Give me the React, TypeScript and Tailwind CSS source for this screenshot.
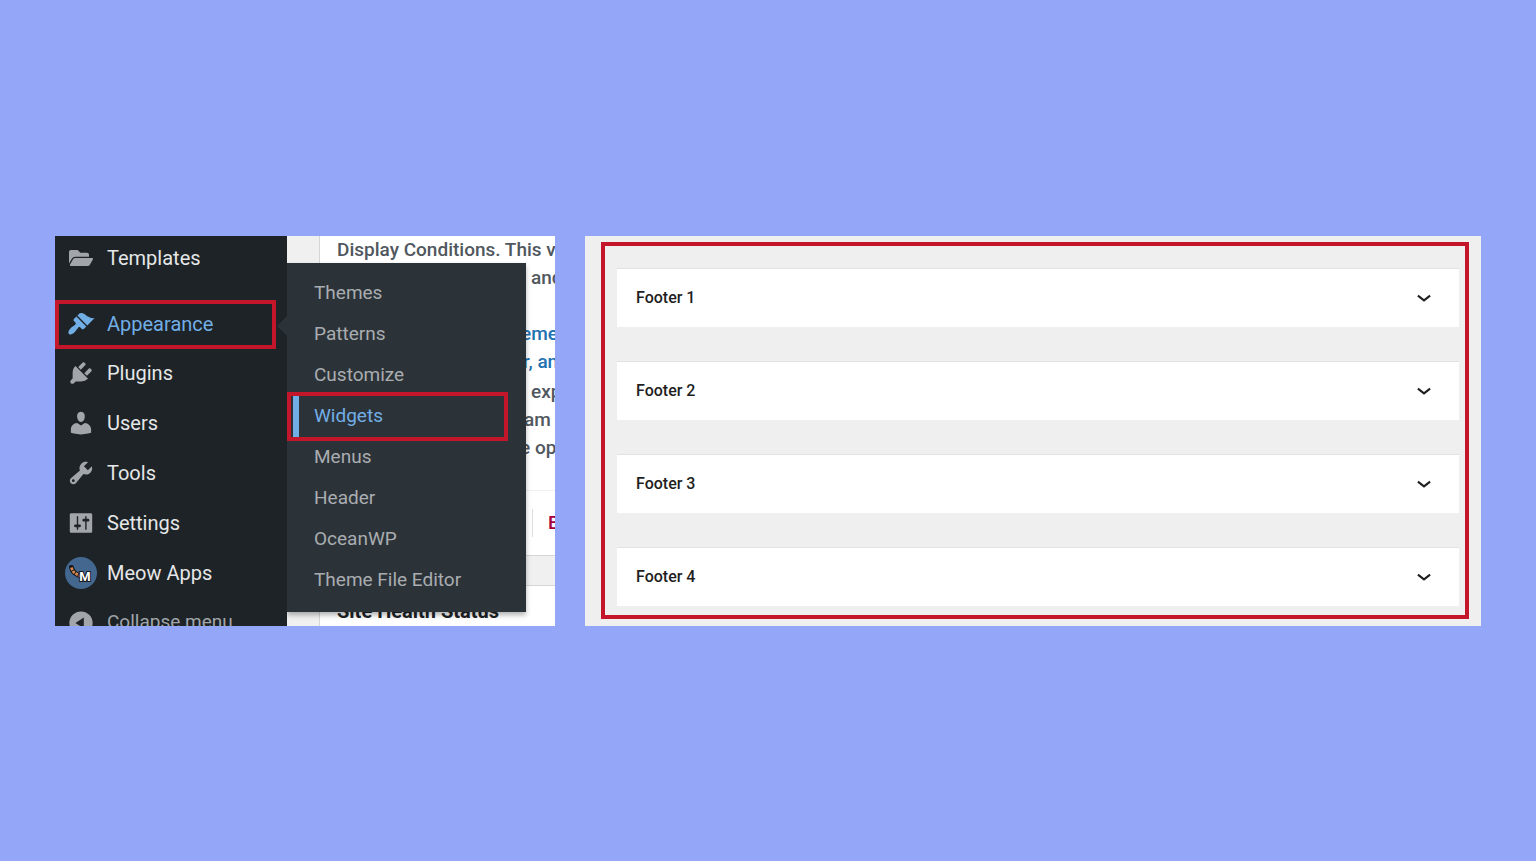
import { useState } from 'react';
import type { ReactNode } from 'react';
import { FaFolderOpen } from 'react-icons/fa';
import clsx from 'clsx';

type MenuItem = { label: string; icon: ReactNode; active?: boolean };

const Dashicon = ({ d }: { d: string }) => (
  <svg viewBox="0 0 20 20" className="w-7 h-7" fill="currentColor" aria-hidden="true">
    <path d={d} />
  </svg>
);

const MeowIcon = () => (
  <svg viewBox="0 0 32 32" className="w-8 h-8 shrink-0" aria-hidden="true">
    <circle cx="16" cy="16" r="16" fill="#43678f" />
    <path d="M6.5 10.5c1 5 4.500 6.500 9 8.500" fill="none" stroke="#16191c" strokeWidth="5" strokeLinecap="round" />
    <path d="M6.500 10.500c1 5 4.500 6.500 9 8.500" fill="none" stroke="#d9894f" strokeWidth="2.800" strokeDasharray="2.800 0.900" />
    <text
      x="20"
      y="23.5"
      textAnchor="middle"
      fill="#fff"
      stroke="#16191c"
      strokeWidth="2"
      paintOrder="stroke"
      className="font-['Roboto',sans-serif] text-[13px] font-bold"
    >
      M
    </text>
  </svg>
);

const CollapseIcon = () => (
  <svg viewBox="0 0 24 24" className="w-6 h-6" aria-hidden="true">
    <circle cx="12" cy="12" r="11.6" fill="#a2a6aa" />
    <path d="M14.8 6.6v10.8L6.4 12z" fill="#1d2327" />
  </svg>
);

const menuItems: MenuItem[] = [
  {
    label: 'Appearance',
    active: true,
    icon: (
      <Dashicon d="M14.48 11.06L7.41 3.99l1.5-1.5c.5-.56 2.3-.47 3.51.32 1.21.8 1.43 1.28 2.91 2.1 1.18.64 2.45 1.26 4.45.85zm-.71.71L6.7 4.7 4.93 6.47c-.39.39-.39 1.02 0 1.41l1.06 1.06c.39.39.39 1.03 0 1.42-.6.6-1.43 1.11-2.21 1.69-.35.26-.7.53-1.01.84C1.43 14.23.4 16.08 1.4 17.07c.99 1 2.84-.03 4.18-1.36.31-.31.58-.66.85-1.02.57-.78 1.08-1.61 1.69-2.21.39-.39 1.02-.39 1.41 0l1.06 1.06c.39.39 1.02.39 1.41 0z" />
    ),
  },
  {
    label: 'Plugins',
    icon: (
      <Dashicon d="M13.11 4.36L9.87 7.6 8 5.73l3.24-3.24c.35-.34 1.05-.2 1.56.32.52.51.66 1.21.31 1.55zm-8 1.77l.91-1.12 9.01 9.01-1.19.84c-.71.71-2.63 1.16-3.82 1.16H6.14L4.9 17.26c-.59.59-1.54.59-2.12 0-.59-.58-.59-1.53 0-2.12l1.24-1.24v-3.88c0-1.13.4-3.19 1.09-3.89zm7.26 3.97l3.24-3.24c.34-.35 1.04-.21 1.55.31.52.51.66 1.21.31 1.55l-3.24 3.25z" />
    ),
  },
  {
    label: 'Users',
    icon: (
      <Dashicon d="M10 9.25c-2.27 0-2.73-3.44-2.73-3.44C7 4.02 7.82 2 9.97 2c2.16 0 2.98 2.02 2.71 3.81 0 0-.41 3.44-2.68 3.44zm0 2.57L12.72 10c2.39 0 4.52 2.33 4.52 4.53v2.49s-3.65 1.13-7.24 1.13c-3.65 0-7.24-1.13-7.24-1.13v-2.49c0-2.25 1.94-4.48 4.47-4.48z" />
    ),
  },
  {
    label: 'Tools',
    icon: (
      <Dashicon d="M16.68 9.77c-1.34 1.34-3.3 1.67-4.95.99l-5.41 6.52c-.99.99-2.59.99-3.58 0s-.99-2.59 0-3.57l6.52-5.42c-.68-1.65-.35-3.61.99-4.95 1.28-1.28 3.12-1.62 4.72-1.06l-2.89 2.89 2.82 2.82 2.86-2.87c.53 1.58.18 3.39-1.08 4.65zM3.81 16.21c.4.39 1.04.39 1.43 0 .4-.4.4-1.04 0-1.43-.39-.4-1.03-.4-1.43 0-.39.39-.39 1.03 0 1.43z" />
    ),
  },
  {
    label: 'Settings',
    icon: (
      <Dashicon d="M18 16V4c0-.55-.45-1-1-1H3c-.55 0-1 .45-1 1v12c0 .55.45 1 1 1h14c.55 0 1-.45 1-1zM8 11h1c.55 0 1 .45 1 1s-.45 1-1 1H8v1.5c0 .28-.22.5-.5.5s-.5-.22-.5-.5V13H6c-.55 0-1-.45-1-1s.45-1 1-1h1V5.5c0-.28.22-.5.5-.5s.5.22.5.5V11zm5-2h-1c-.55 0-1-.45-1-1s.45-1 1-1h1V5.5c0-.28.22-.5.5-.5s.5.22.5.5V7h1c.55 0 1 .45 1 1s-.45 1-1 1h-1v5.5c0 .28-.22.5-.5.5s-.5-.22-.5-.5V9z" />
    ),
  },
  { label: 'Meow Apps', icon: <MeowIcon /> },
];

const submenu = ['Themes', 'Patterns', 'Customize', 'Widgets', 'Menus', 'Header', 'OceanWP', 'Theme File Editor'];

const footers = ['Footer 1', 'Footer 2', 'Footer 3', 'Footer 4'];

function Sidebar() {
  return (
    <nav className="w-[232px] shrink-0 bg-[#1d2327] text-xl text-[#e6e7e8]">
      <a href="#templates" className="flex items-center gap-3 h-[46px] pl-3 pb-0.5">
        <span className="flex w-7 justify-center text-[#a2a6aa]">
          <FaFolderOpen className="w-6 h-6" />
        </span>
        Templates
      </a>
      <ul className="mt-[18px]">
        {menuItems.map((item) => (
          <li key={item.label} className="relative">
            <a
              href="#menu"
              className={clsx(
                'flex items-center gap-3 pl-3',
                item.active ? 'h-[49px] text-[#72aee6]' : 'h-[50px] pb-0.5',
              )}
            >
              <span className={clsx('flex w-7 justify-center', !item.active && 'text-[#a2a6aa]')}>{item.icon}</span>
              {item.label}
            </a>
            {item.active && (
              <>
                <span className="absolute inset-y-0 left-0 w-[221px] border-4 border-[#c4162a] pointer-events-none" />
                {/* Arrow pointing at the open submenu */}
                <svg viewBox="0 0 10 20" className="absolute right-0 top-4 w-2.5 h-5" aria-hidden="true">
                  <path d="M10 0v20L0 10z" fill="#2c3338" />
                </svg>
              </>
            )}
          </li>
        ))}
      </ul>
      <button type="button" className="flex items-center gap-3 h-[50px] pl-3 pb-0.5 text-[19px] text-[#a2a6aa]">
        <span className="flex w-7 justify-center">
          <CollapseIcon />
        </span>
        Collapse menu
      </button>
    </nav>
  );
}

function Flyout() {
  return (
    <ul className="absolute left-0 top-[27px] w-[239px] pt-2.5 pb-[11px] bg-[#2c3338] text-[19px] text-[#a9adb1] shadow-[0_3px_5px_rgba(0,0,0,0.3)]">
      {submenu.map((label) => {
        const current = label === 'Widgets';
        return (
          <li key={label} className="relative">
            <a href="#submenu" className={clsx('flex items-center h-[41px] pl-[27px]', current && 'text-[#72aee6]')}>
              {label}
            </a>
            {current && (
              <>
                <span className="absolute inset-y-0 left-1.5 w-1.5 bg-[#72aee6]" />
                <span className="absolute -inset-y-1 left-0 w-[221px] border-4 border-[#c4162a] pointer-events-none" />
              </>
            )}
          </li>
        );
      })}
    </ul>
  );
}

function Dashboard() {
  return (
    <div className="relative flex-1 min-w-0 overflow-hidden bg-[#f0f0f1] pl-8">
      <section className="h-80 border-l border-b border-[#d4d5d7] bg-white text-[19px] leading-7 font-medium text-[#50575e] whitespace-nowrap">
        <div className="h-[255px] border-b border-[#f0f0f1]">
          <p className="pl-[17px]">Display Conditions. This v</p>
          <p className="pl-[211px]">and</p>
          <a href="#changelog" className="block mt-7 text-[#2271b1]">
            <span className="block pl-[201px]">eme</span>
            <span className="block pl-[203px]">r, an</span>
          </a>
          <p className="mt-0.5 pl-[211px]">exp</p>
          <p className="pl-[204px]">am s</p>
          <p className="pl-[200px]">e op</p>
        </div>
        <div className="flex items-center h-16 pl-[212px]">
          <a href="#blog" className="border-l border-[#dcdcde] pl-[15px] text-[#a3003c]">
            B
          </a>
        </div>
      </section>
      <section className="mt-[29px] h-20 border-l border-t border-[#d4d5d7] bg-white">
        <h2 className="mt-[11px] pl-[17px] text-xl leading-7 font-bold text-[#1d2327]">Site Health Status</h2>
      </section>
      <Flyout />
    </div>
  );
}

function WidgetAreas() {
  const [open, setOpen] = useState<string | null>(null);

  return (
    <div className="flex-1 min-w-0 bg-[#efefef] pt-1.5 pr-3 pb-[7px] pl-4">
      <div className="flex flex-col gap-[34px] h-full border-4 border-[#c4162a] pt-[22px] pr-1.5 pl-3">
        {footers.map((name) => (
          <button
            key={name}
            type="button"
            aria-expanded={open === name}
            onClick={() => setOpen(open === name ? null : name)}
            className="flex items-center justify-between h-[59px] shrink-0 bg-white border-t border-[#e2e2e2] pl-[19px] pr-7 text-base font-medium text-[#1e1e1e]"
          >
            {name}
            <svg viewBox="0 0 14 8" className="w-3.5 h-2" fill="none" stroke="#1e1e1e" strokeWidth="2" aria-hidden="true">
              <path d="M0.9 1.6L7 6.4l6.1-4.8" />
            </svg>
          </button>
        ))}
      </div>
    </div>
  );
}

export default function App() {
  return (
    <main className="flex items-center gap-[30px] min-h-screen bg-[#94a6f7] border-b-[3px] border-white px-[55px] font-['Roboto',sans-serif]">
      <div className="flex w-[500px] h-[390px] shrink-0 overflow-hidden">
        <Sidebar />
        <Dashboard />
      </div>
      <div className="flex flex-1 min-w-0 h-[390px]">
        <WidgetAreas />
      </div>
    </main>
  );
}
